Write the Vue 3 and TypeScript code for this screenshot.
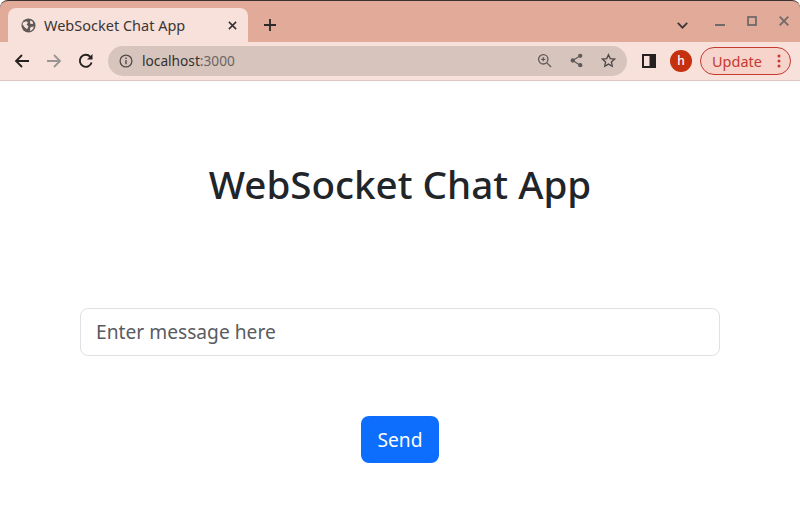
<script setup lang="ts">
const title = 'WebSocket Chat App'
</script>

<template>
  <div class="window">
    <header class="tabstrip">
      <div class="tab">
        <svg class="globe" viewBox="0 0 16 16"><circle cx="8" cy="8" r="7.500" fill="#5f5a59"/><path d="M2.500 4.500 6 3.500 7.500 5 6 7l2 2-1.500 3-3-2.500-2-3ZM10 2.500l2.500 1.500.5 2-2.500.5L9.500 5ZM10.500 9.500l3.300-.5-1.300 3-2.500 2-.5-2.500Z" fill="#f7e1da"/></svg>
        <span class="tab-title">{{ title }}</span>
        <svg class="tab-close" viewBox="0 0 10 10"><path d="M1 1l8 8M9 1l-8 8" stroke="#33302f" stroke-width="1.700"/></svg>
      </div>
      <svg class="new-tab" viewBox="0 0 12 12"><path d="M6 0v12M0 6h12" stroke="#2b2827" stroke-width="1.800"/></svg>
      <div class="win-controls">
        <svg class="chev" viewBox="0 0 10 6"><path d="M.7.700 5 5 9.300.700" fill="none" stroke="#3a3635" stroke-width="1.600"/></svg>
        <svg class="win min" viewBox="0 0 10 10"><path d="M0 9h10" stroke="#6f6a69" stroke-width="2"/></svg>
        <svg class="win max" viewBox="0 0 10 10"><rect x="1" y="1" width="8" height="8" fill="none" stroke="#6f6a69" stroke-width="1.800"/></svg>
        <svg class="win" viewBox="0 0 10 10"><path d="M.7.700l8.600 8.600M9.300.700.700 9.300" stroke="#6f6a69" stroke-width="1.800"/></svg>
      </div>
    </header>

    <nav class="toolbar">
      <svg class="nav" viewBox="0 0 16 16"><path d="M15 8H2M8 2 2 8l6 6" fill="none" stroke="#26211f" stroke-width="1.800"/></svg>
      <svg class="nav" viewBox="0 0 16 16"><path d="M1 8h13M8 2l6 6-6 6" fill="none" stroke="#9a9492" stroke-width="1.800"/></svg>
      <svg class="nav" viewBox="0 0 16 16"><path d="M13.600 9.500A6 6 0 1 1 12.300 3.800" fill="none" stroke="#26211f" stroke-width="1.900"/><path d="M14.500 1v5.500H9Z" fill="#26211f"/></svg>
      <div class="omnibox">
        <svg class="info" viewBox="0 0 14 14"><circle cx="7" cy="7" r="5.900" fill="none" stroke="#504c4b" stroke-width="1.300"/><path d="M7 6v4.200M7 3.500v1.500" stroke="#504c4b" stroke-width="1.400"/></svg>
        <span class="url">localhost<span class="port">:3000</span></span>
        <svg class="omni-icon" viewBox="0 0 16 16"><circle cx="6.700" cy="6.700" r="5" fill="none" stroke="#5f5a59" stroke-width="1.400"/><path d="M10.500 10.500 15 15M4.500 6.700h4.400M6.700 4.500v4.400" stroke="#5f5a59" stroke-width="1.400"/></svg>
        <svg class="omni-icon" viewBox="0 0 16 16"><path d="M12 3 4 8l8 5" fill="none" stroke="#5f5a59" stroke-width="1.300"/><circle cx="12" cy="3" r="2.300" fill="#5f5a59"/><circle cx="4" cy="8" r="2.300" fill="#5f5a59"/><circle cx="12" cy="13" r="2.300" fill="#5f5a59"/></svg>
        <svg class="omni-icon" viewBox="0 0 16 16"><path d="m8 1.800 1.900 4.200 4.600.500-3.400 3.100.9 4.500L8 11.800l-4 2.300.9-4.500L1.500 6.500 6.100 6Z" fill="none" stroke="#4d4948" stroke-width="1.400"/></svg>
      </div>
      <svg class="panel" viewBox="0 0 14 14"><rect x="1" y="1" width="12" height="12" fill="none" stroke="#26211f" stroke-width="2"/><rect x="7.500" y="1" width="5.500" height="12" fill="#26211f"/></svg>
      <div class="avatar">h</div>
      <div class="update">
        <span>Update</span>
        <svg class="dots" viewBox="0 0 4 14"><circle cx="2" cy="2" r="1.500"/><circle cx="2" cy="7" r="1.500"/><circle cx="2" cy="12" r="1.500"/></svg>
      </div>
    </nav>

    <main class="page">
      <h1>{{ title }}</h1>
      <input class="message" type="text" placeholder="Enter message here" />
      <button class="send" type="button">Send</button>
    </main>
  </div>
</template>

<style>
html, body { margin: 0; background: #fff; }
</style>

<style scoped>
.window {
  width: 800px;
  height: 527px;
  overflow: hidden;
  display: flex;
  flex-direction: column;
  font-family: "Noto Sans", "Open Sans", sans-serif;
  background: #fff;
}
.tabstrip {
  height: 42px;
  box-sizing: border-box;
  flex: none;
  display: flex;
  align-items: flex-end;
  padding-left: 8px;
  background: #e2aa99;
  border-top: 1px solid #3a3230;
  border-radius: 8px 8px 0 0;
}
.tab {
  width: 240px;
  height: 34px;
  box-sizing: border-box;
  display: flex;
  align-items: center;
  padding: 0 11px 0 13px;
  background: #f7e1da;
  border-radius: 8px 8px 0 0;
}
.globe { width: 15px; height: 15px; flex: none; }
.tab-title {
  margin-left: 8px;
  flex: 1;
  font-size: 14.500px;
  color: #3a3635;
  white-space: nowrap;
}
.tab-close { width: 9px; height: 9px; flex: none; }
.new-tab { width: 12px; height: 12px; margin: 0 0 11px 16px; flex: none; }
.win-controls {
  margin-left: auto;
  display: flex;
  align-items: flex-start;
  align-self: flex-start;
  margin-top: 15px;
  padding-right: 11px;
}
.chev { width: 11px; height: 7px; margin: 6px 27px 0 0; }
.win { width: 10px; height: 10px; }
.min { margin-right: 22px; }
.max { margin-right: 22px; }
.toolbar {
  height: 39px;
  box-sizing: border-box;
  flex: none;
  display: flex;
  align-items: center;
  padding: 0 9px 1px 14px;
  background: #f7e1da;
  border-bottom: 1px solid #dcc5bf;
}
.nav { width: 16px; height: 16px; flex: none; margin-right: 16px; }
.nav:nth-child(3) { margin-right: 14px; }
.omnibox {
  width: 519px;
  height: 30px;
  flex: none;
  box-sizing: border-box;
  display: flex;
  align-items: center;
  padding: 0 11px 0 11px;
  background: #d7c5bd;
  border-radius: 15px;
}
.info { width: 14px; height: 14px; flex: none; }
.url {
  margin-left: 9px;
  flex: 1;
  font-size: 13.700px;
  color: #33302f;
}
.port { color: #6a6462; }
.omni-icon { width: 15px; height: 15px; flex: none; margin-left: 17px; }
.panel { width: 14px; height: 14px; flex: none; margin-left: 15px; }
.avatar {
  width: 22px;
  height: 22px;
  margin-left: 14px;
  flex: none;
  border-radius: 50%;
  background: #c5310f;
  color: #fff;
  font-size: 12px;
  font-weight: 500;
  line-height: 22px;
  text-align: center;
}
.update {
  width: 91px;
  height: 28px;
  margin-left: 8px;
  box-sizing: border-box;
  flex: none;
  display: flex;
  align-items: center;
  justify-content: space-between;
  padding: 0 9px 0 11px;
  border: 1.500px solid #c5392f;
  border-radius: 14px;
  background: #f6d3cb;
  color: #c5392f;
  font-size: 14.500px;
}
.dots { width: 4px; height: 14px; fill: #c5392f; }
.page {
  flex: 1;
  display: flex;
  flex-direction: column;
  align-items: center;
}
h1 {
  margin: 79px 0 0;
  font-size: 38.600px;
  line-height: 48px;
  font-weight: 500;
  color: #212529;
  white-space: nowrap;
}
.message {
  width: 640px;
  height: 48px;
  margin-top: 100px;
  box-sizing: border-box;
  padding: 0 15px 2px;
  border: 1px solid #dee2e6;
  border-radius: 8px;
  background: #fff;
  font-family: inherit;
  font-size: 19.200px;
  color: #212529;
  outline: none;
}
.message::placeholder { color: #595c5f; opacity: 1; }
.send {
  width: 78px;
  height: 47px;
  margin-top: 60px;
  border: 0;
  border-radius: 8px;
  background: #0d6efd;
  color: #fff;
  font-family: inherit;
  font-size: 19.200px;
  padding: 0;
}
</style>
